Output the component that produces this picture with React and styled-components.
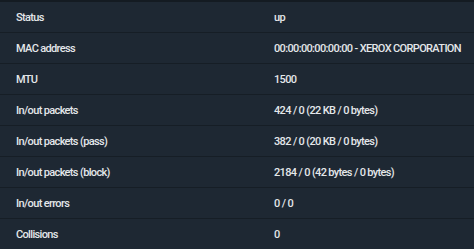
import React from 'react';
import styled, { createGlobalStyle } from 'styled-components';

const GlobalStyle = createGlobalStyle`
  html, body {
    margin: 0;
    padding: 0;
    background: #1e2833;
  }
  body {
    font-family: Roboto, "Noto Sans", sans-serif;
  }
`;

const rows = [
  ['Status', 'up'],
  ['MAC address', '00:00:00:00:00:00 - XEROX CORPORATION'],
  ['MTU', '1500'],
  ['In/out packets', '424 / 0 (22 KB / 0 bytes)'],
  ['In/out packets (pass)', '382 / 0 (20 KB / 0 bytes)'],
  ['In/out packets (block)', '2184 / 0 (42 bytes / 0 bytes)'],
  ['In/out errors', '0 / 0'],
  ['Collisions', '0'],
];

const App = () => {
  return (
    <>
      <GlobalStyle />
      <Table>
        {rows.map(([label, value]) => (
          <Row key={label}>
            <Label>{label}</Label>
            <Value>{value}</Value>
          </Row>
        ))}
      </Table>
    </>
  );
};

const Table = styled.div`
  width: 474px;
  display: flex;
  flex-direction: column;
  border-top: 2px solid #141b22;
`;

const Row = styled.div`
  display: grid;
  grid-template-columns: 274px 1fr;
  align-items: center;
  height: 30px;
  border-bottom: 1px solid #161e26;
  background: #1e2833;
  color: #e4e7ea;
  font-size: 11px;
  font-weight: 500;
  letter-spacing: -0.65px;
`;

const Label = styled.div`
  padding-left: 16px;
`;

const Value = styled.div`
  white-space: nowrap;
`;

export default App;
